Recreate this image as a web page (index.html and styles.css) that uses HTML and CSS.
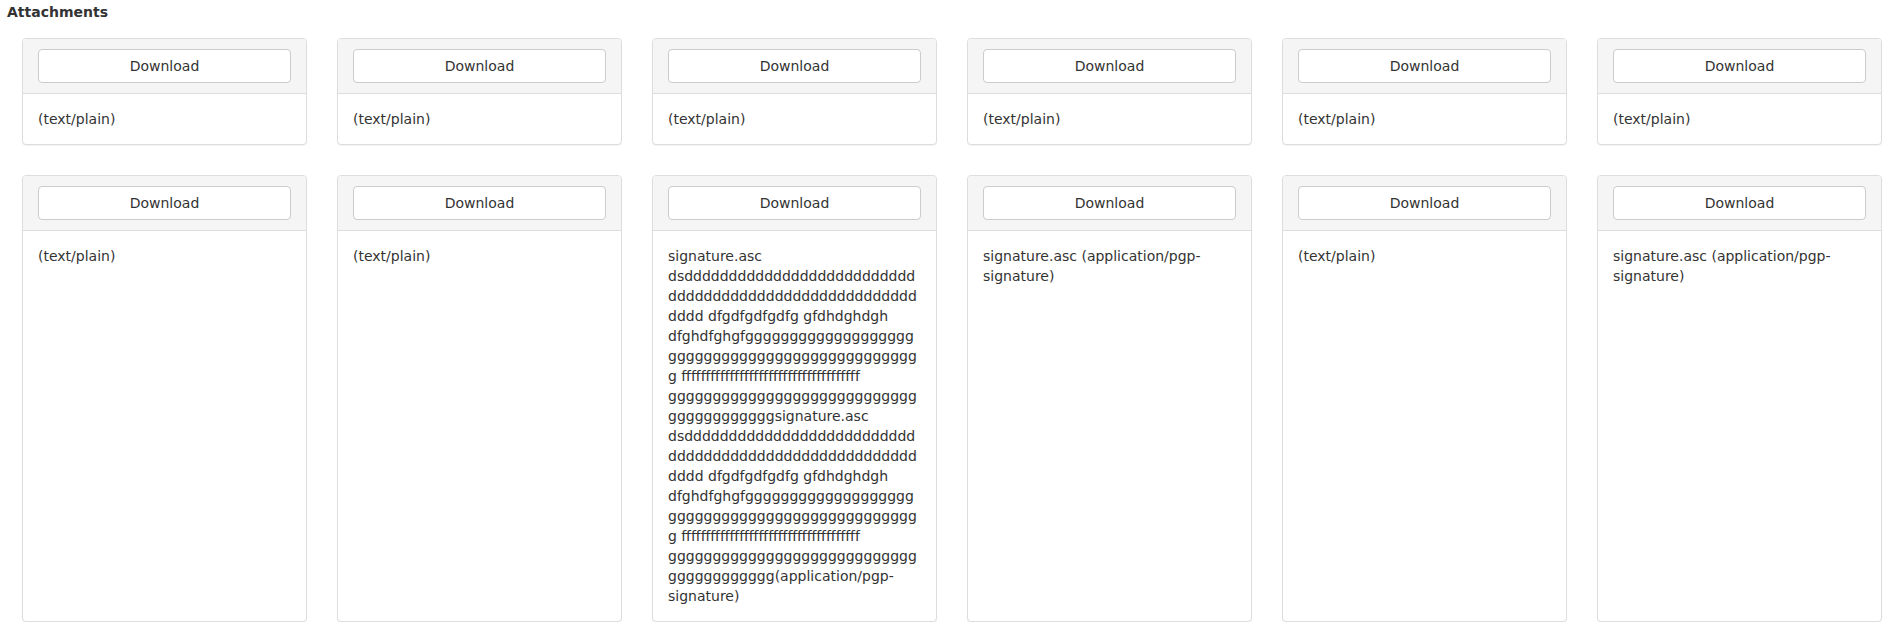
FILE: index.html
```html
<!DOCTYPE html>
<html>
<head>
<meta charset="utf-8">
<link rel="stylesheet" href="styles.css">
</head>
<body>
<div class="page">
  <div class="title">Attachments</div>
  <div class="grid">
    <div class="panel"><div class="panel-heading"><button class="btn">Download</button></div><div class="panel-body">(text/plain)</div></div>
    <div class="panel"><div class="panel-heading"><button class="btn">Download</button></div><div class="panel-body">(text/plain)</div></div>
    <div class="panel"><div class="panel-heading"><button class="btn">Download</button></div><div class="panel-body">(text/plain)</div></div>
    <div class="panel"><div class="panel-heading"><button class="btn">Download</button></div><div class="panel-body">(text/plain)</div></div>
    <div class="panel"><div class="panel-heading"><button class="btn">Download</button></div><div class="panel-body">(text/plain)</div></div>
    <div class="panel"><div class="panel-heading"><button class="btn">Download</button></div><div class="panel-body">(text/plain)</div></div>

    <div class="panel"><div class="panel-heading"><button class="btn">Download</button></div><div class="panel-body">(text/plain)</div></div>
    <div class="panel"><div class="panel-heading"><button class="btn">Download</button></div><div class="panel-body">(text/plain)</div></div>
    <div class="panel"><div class="panel-heading"><button class="btn">Download</button></div><div class="panel-body">signature.asc dsdddddddddddddddddddddddddddddddddddddddddddddddddddddddddd dfgdfgdfgdfg gfdhdghdgh dfghdfghgfgggggggggggggggggggggggggggggggggggggggggggggggg fffffffffffffffffffffffffffffffffffff ggggggggggggggggggggggggggggggggggggggggsignature.asc dsdddddddddddddddddddddddddddddddddddddddddddddddddddddddddd dfgdfgdfgdfg gfdhdghdgh dfghdfghgfgggggggggggggggggggggggggggggggggggggggggggggggg fffffffffffffffffffffffffffffffffffff gggggggggggggggggggggggggggggggggggggggg(application/pgp-signature)</div></div>
    <div class="panel"><div class="panel-heading"><button class="btn">Download</button></div><div class="panel-body">signature.asc (application/pgp-signature)</div></div>
    <div class="panel"><div class="panel-heading"><button class="btn">Download</button></div><div class="panel-body">(text/plain)</div></div>
    <div class="panel"><div class="panel-heading"><button class="btn">Download</button></div><div class="panel-body">signature.asc (application/pgp-signature)</div></div>
  </div>
</div>
</body>
</html>
```

FILE: styles.css
```css
html, body {
  margin: 0;
  padding: 0;
  background: #fff;
}
body {
  font-family: "DejaVu Sans", sans-serif;
  font-size: 14px;
  line-height: 20px;
  color: #333;
}
.page {
  padding: 2px 0 0 7px;
}
.title {
  font-weight: bold;
  line-height: 20px;
  margin-bottom: 16px;
}
.grid {
  display: grid;
  grid-template-columns: repeat(6, 285px);
  column-gap: 30px;
  row-gap: 30px;
  padding-left: 15px;
}
.panel {
  border: 1px solid #ddd;
  border-radius: 4px;
  background: #fff;
  box-shadow: 0 1px 1px rgba(0, 0, 0, 0.05);
  display: flex;
  flex-direction: column;
}
.panel-heading {
  background: #f5f5f5;
  border-bottom: 1px solid #ddd;
  padding: 10px 15px;
  border-radius: 3px 3px 0 0;
}
.btn {
  display: block;
  width: 100%;
  height: 34px;
  padding: 6px 12px;
  font-family: "DejaVu Sans", sans-serif;
  font-size: 14px;
  line-height: 20px;
  color: #333;
  background: #fff;
  border: 1px solid #ccc;
  border-radius: 4px;
  box-sizing: border-box;
}
.panel-body {
  padding: 15px;
  overflow-wrap: break-word;
  word-wrap: break-word;
  flex: 1;
}
```
